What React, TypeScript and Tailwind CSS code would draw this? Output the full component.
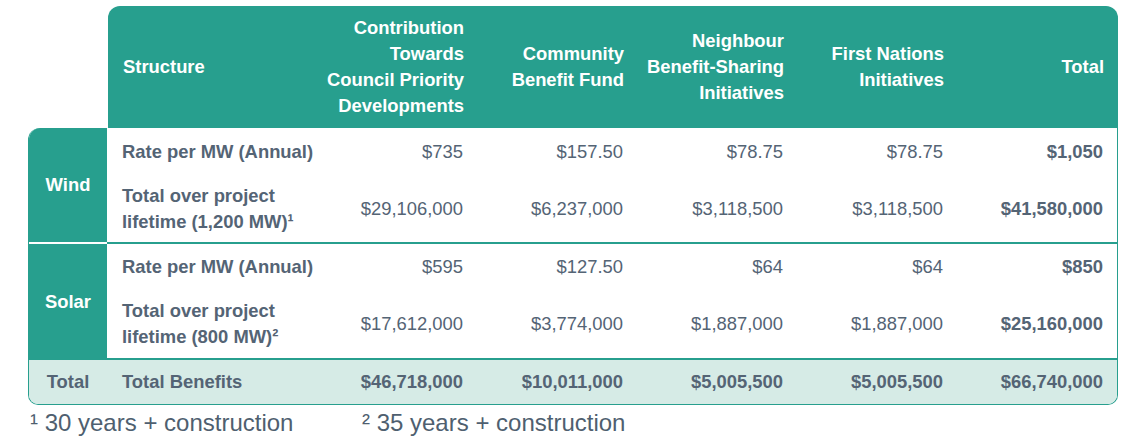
import React from "react";

const GRID = "grid grid-cols-[211px_160px_160px_160px_160px_159px]";

type Row = { label: React.ReactNode; values: string[]; total: string; pad: string };

const wind: Row[] = [
  {
    label: "Rate per MW (Annual)",
    values: ["$735", "$157.50", "$78.75", "$78.75"],
    total: "$1,050",
    pad: "pt-[11px] pb-[7px]",
  },
  {
    label: (
      <>
        Total over project
        <br />
        lifetime (1,200 MW)¹
      </>
    ),
    values: ["$29,106,000", "$6,237,000", "$3,118,500", "$3,118,500"],
    total: "$41,580,000",
    pad: "pt-[11px] pb-[7px]",
  },
];

const solar: Row[] = [
  {
    label: "Rate per MW (Annual)",
    values: ["$595", "$127.50", "$64", "$64"],
    total: "$850",
    pad: "pt-[10px] pb-[8px]",
  },
  {
    label: (
      <>
        Total over project
        <br />
        lifetime (800 MW)²
      </>
    ),
    values: ["$17,612,000", "$3,774,000", "$1,887,000", "$1,887,000"],
    total: "$25,160,000",
    pad: "pt-[10px] pb-[8px]",
  },
];

const headers: React.ReactNode[] = [
  <>
    Contribution
    <br />
    Towards
    <br />
    Council Priority
    <br />
    Developments
  </>,
  <>
    Community
    <br />
    Benefit Fund
  </>,
  <>
    Neighbour
    <br />
    Benefit-Sharing
    <br />
    Initiatives
  </>,
  <>
    First Nations
    <br />
    Initiatives
  </>,
  <>Total</>,
];

function BodyRows({ rows }: { rows: Row[] }) {
  return (
    <div className="flex-1 border-b-2 border-[#279f8e] bg-white">
      {rows.map((r, i) => (
        <div key={i} className={`${GRID} items-center ${r.pad}`}>
          <div className="pl-[15px] font-bold">{r.label}</div>
          {r.values.map((v) => (
            <div key={v + i} className="pr-[15px] text-right">
              {v}
            </div>
          ))}
          <div className="pr-[14px] text-right font-bold">{r.total}</div>
        </div>
      ))}
    </div>
  );
}

export default function App() {
  return (
    <div className="bg-white w-[1130px] h-[437px] overflow-hidden pl-[28px] pt-[6px] font-['Liberation_Sans',Arial,sans-serif] text-[18.4px] leading-[26px] text-[#546475] whitespace-nowrap">
      <div className="w-[1090px]">
        {/* header */}
        <div className="flex">
          <div className="w-[80px]" />
          <div className={`${GRID} flex-1 items-center rounded-t-[12px] bg-[#279f8e] py-[9px] font-bold text-white`}>
            <div className="pl-[15px]">Structure</div>
            {headers.map((h, i) => (
              <div key={i} className={`text-right ${i === 4 ? "pr-[14px]" : "pr-[15px]"}`}>
                {h}
              </div>
            ))}
          </div>
        </div>

        {/* body */}
        <div className="overflow-hidden rounded-tl-[12px] rounded-b-[10px] border-x border-b border-[#279f8e]">
          <div className="flex">
            <div className="flex w-[79px] items-center justify-center border-b-2 border-white bg-[#279f8e] font-bold text-white">
              Wind
            </div>
            <BodyRows rows={wind} />
          </div>
          <div className="flex">
            <div className="flex w-[79px] items-center justify-center bg-[#279f8e] font-bold text-white">
              Solar
            </div>
            <BodyRows rows={solar} />
          </div>
          <div className="flex bg-[#d6ebe6] py-[9px] font-bold">
            <div className="w-[79px] text-center">Total</div>
            <div className={`${GRID} flex-1`}>
              <div className="pl-[15px]">Total Benefits</div>
              <div className="pr-[15px] text-right">$46,718,000</div>
              <div className="pr-[15px] text-right">$10,011,000</div>
              <div className="pr-[15px] text-right">$5,005,500</div>
              <div className="pr-[15px] text-right">$5,005,500</div>
              <div className="pr-[14px] text-right">$66,740,000</div>
            </div>
          </div>
        </div>
      </div>

      {/* footnotes */}
      <div className="mt-[5px] flex text-[24px] leading-[26px] text-[#4f5f70]">
        <div className="w-[334px] pl-[2px]">¹ 30 years + construction</div>
        <div>² 35 years + construction</div>
      </div>
    </div>
  );
}
